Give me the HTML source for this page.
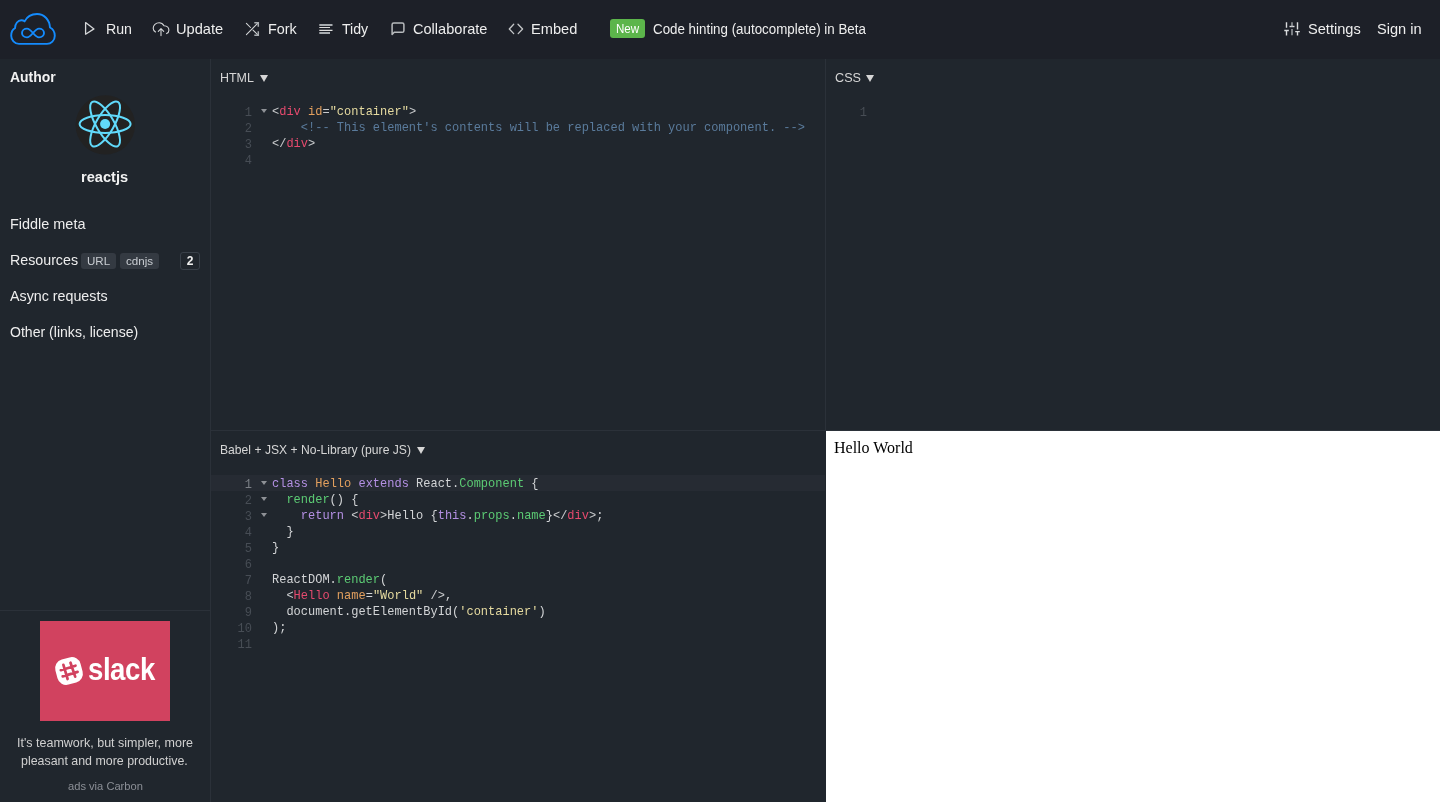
<!DOCTYPE html>
<html>
<head>
<meta charset="utf-8">
<style>
*{margin:0;padding:0;box-sizing:border-box}
html,body{width:1440px;height:802px;overflow:hidden;background:#20262d;font-family:"Liberation Sans",sans-serif}
#root{position:absolute;left:0;top:0;width:1440px;height:802px;background:#20262d;will-change:transform;overflow:hidden}
.abs{position:absolute}
.tx{position:absolute;line-height:20px;white-space:pre;transform-origin:0 0}
.code{position:absolute;font-family:"Liberation Mono",monospace;font-size:13px;line-height:16px;white-space:pre;color:#d2d4d6;transform:scaleX(0.923077);transform-origin:0 0}
.gut{position:absolute;font-family:"Liberation Mono",monospace;font-size:12px;line-height:16px;white-space:pre;color:#474d55;text-align:right;width:40px}
.fold{position:absolute;width:0;height:0;border-left:3px solid transparent;border-right:3px solid transparent;border-top:4px solid #8e9196}
.tri{position:absolute;width:0;height:0;border-left:4px solid transparent;border-right:4px solid transparent;border-top:7px solid #d6d6d6}
.t{color:#e54a6e}.at{color:#e3a05e}.s{color:#e6dba0}.c{color:#5a7b9c}.k{color:#b490e4}.d{color:#e3a05e}.p{color:#5ccb74}.b{color:#c9cbcd}
</style>
</head>
<body>
<div id="root">
<!-- header -->
<div class="abs" style="left:0;top:0;width:1440px;height:59px;background:#1d2028"></div>

<svg class="abs" style="left:0;top:0" width="1440" height="59" viewBox="0 0 1440 59">
  <g fill="none" stroke="#148bfd" stroke-width="1.9" stroke-linejoin="round" stroke-linecap="round">
    <path d="M19 43.9 C14.5 43.9 11.2 40 11.2 35.8 C11.2 32 13 29.3 15 28.2 C15 23.5 18 20.3 21.3 20.3 C22.5 20.3 23.8 20.7 24.6 21.4 C26.8 17 31.5 14 37 14 C44 14 49.5 19.5 50 27.5 C53 29 54.8 32 54.8 35.8 C54.8 40.5 51 43.9 47 43.9 Z"/>
    <path d="M33 33 C30.5 30 29.3 28.6 27 28.6 C24.2 28.6 22 30.5 22 33 C22 35.5 24.2 37.4 27 37.4 C29.3 37.4 30.5 36 33 33 C35.5 30 36.7 28.6 39 28.6 C41.8 28.6 44 30.5 44 33 C44 35.5 41.8 37.4 39 37.4 C36.7 37.4 35.5 36 33 33 Z"/>
  </g>
  <g fill="none" stroke="#d4d6d8" stroke-width="1.3" stroke-linejoin="round" stroke-linecap="round">
    <path d="M85.6 22.6 L94 28.9 L85.6 34.2 Z"/>
    <path d="M155.5 32 C154 31 153.2 29.8 153.2 28.3 C153.2 25.3 155.8 22.8 159.2 22.8 C161.2 22.8 162.8 23.8 164 25.8 C166.8 26 168.9 27.8 168.9 30.2 C168.9 31.7 168 32.9 166.6 33.6" stroke-width="1.1"/>
    <path d="M161 35.6 V29.2 M158.3 31.4 L161 28.7 L163.7 31.4" stroke-width="1.1"/>
    <path d="M246.4 23.4 L250.5 27.5 M253 30.1 L257.6 34.6 M246.4 34.6 L257.6 23.4" stroke-width="1.05"/>
    <path d="M254.3 22.8 H258.3 V26.8 M258.3 31.2 V35.3 H254.3" stroke="#a9adb1" stroke-width="1.5" stroke-linecap="butt" stroke-linejoin="miter"/>
    <path d="M394.2 32.3 H402.3 Q403.9 32.3 403.9 30.7 V24.5 Q403.9 22.9 402.3 22.9 H393.7 Q392.1 22.9 392.1 24.5 V34.5 Z" stroke="#b7babd" stroke-width="1.5"/>
    <path d="M513.7 24.3 L509.3 29 L513.7 33.6 M518 24.3 L522.6 29 L518.2 33.6" stroke="#c4c6c8" stroke-width="1.3"/>
  </g>
  <g stroke-linecap="butt" fill="none">
    <path d="M319.3 25 H332.5 M319.3 33 H330" stroke="#a7abaf" stroke-width="1.8"/>
    <path d="M319.3 27.5 H330 M319.3 30.4 H332.5" stroke="#dcdcdc" stroke-width="1.2"/>
  </g>
  <g fill="none" stroke="#dadcde" stroke-width="1.4" stroke-linecap="butt">
    <path d="M1286.5 22.2 V27.8 M1284.3 30.5 H1288.8 M1286.5 30.5 V35.5"/>
    <path d="M1289.5 26.5 H1294.5"/>
    <path d="M1292 22.2 V26.5 M1292 29 V35.3" stroke="#a3a7ab"/>
    <path d="M1297.5 22.2 V29.4 M1295.2 31.6 H1299.8 M1297.5 31.6 V35.5"/>
  </g>
</svg>
<div class="abs" style="left:610px;top:19px;width:35px;height:19px;background:#5cb54b;border-radius:3px"></div>

<!-- borders -->
<div class="abs" style="left:210px;top:59px;width:1px;height:743px;background:#2b3139"></div>
<div class="abs" style="left:825px;top:59px;width:1px;height:372px;background:#2b3139"></div>
<div class="abs" style="left:211px;top:430px;width:1229px;height:1px;background:#2b3139"></div>
<div class="abs" style="left:0;top:610px;width:210px;height:1px;background:#2b3139"></div>

<!-- react logo -->
<svg class="abs" style="left:0;top:59px" width="210" height="120" viewBox="0 59 210 120">
  <circle cx="105.3" cy="124.9" r="29.7" fill="#222222"/>
  <g fill="none" stroke="#61dafb" stroke-width="2">
    <ellipse cx="105.1" cy="124" rx="25.5" ry="8.9"/>
    <ellipse cx="105.1" cy="124" rx="25.5" ry="8.9" transform="rotate(60 105.1 124)"/>
    <ellipse cx="105.1" cy="124" rx="25.5" ry="8.9" transform="rotate(120 105.1 124)"/>
  </g>
  <circle cx="105.1" cy="124" r="5" fill="#61dafb"/>
</svg>

<!-- badges -->
<div class="abs" style="left:81px;top:253px;width:35px;height:16px;background:#343a42;border-radius:3px"></div>
<div class="abs" style="left:120px;top:253px;width:39px;height:16px;background:#343a42;border-radius:3px"></div>
<div class="abs" style="left:180px;top:252px;width:20px;height:18px;border:1px solid #394049;border-radius:3px;color:#f0f0f0;font-size:12px;font-weight:bold;line-height:16px;text-align:center">2</div>

<!-- slack ad -->
<div class="abs" style="left:40px;top:621px;width:130px;height:100px;background:#d1425f"></div>
<svg class="abs" style="left:40px;top:621px" width="130" height="100" viewBox="40 621 130 100">
  <rect x="56" y="658" width="26" height="26" rx="9" transform="rotate(-15 69 671)" fill="#ffffff"/>
  <g stroke="#d1425f" stroke-width="2.7" stroke-linecap="round">
    <path d="M63.4 664.8 L67.6 679 M70.5 662.7 L75.2 676.6 M60.8 670.2 L75.5 665.7 M62.7 676.4 L77.6 671.9"/>
  </g>
</svg>
<div class="tx" id="t_slack" style="left:88px;top:660px;font-size:31px;font-weight:bold;color:#ffffff;transform:scaleX(0.89);letter-spacing:-0.5px">slack</div>

<!-- HTML panel -->
<div class="tri" style="left:260px;top:75px"></div>
<div class="gut" style="left:212px;top:105px">1
2
3
4</div>
<div class="fold" style="left:261px;top:109px"></div>
<div class="code" style="left:272px;top:104px"><span class="b">&lt;</span><span class="t">div</span> <span class="at">id</span><span class="b">=</span><span class="s">"container"</span><span class="b">&gt;</span>
    <span class="c">&lt;!-- This element's contents will be replaced with your component. --&gt;</span>
<span class="b">&lt;/</span><span class="t">div</span><span class="b">&gt;</span>
</div>

<!-- CSS panel -->
<div class="tri" style="left:866px;top:75px"></div>
<div class="gut" style="left:827px;top:105px">1</div>

<!-- JS panel -->
<div class="tri" style="left:417px;top:447px"></div>
<div class="abs" style="left:211px;top:475px;width:614px;height:16px;background:#262b33"></div>
<div class="gut" style="left:212px;top:477px"><span style="color:#7c8087">1</span>
2
3
4
5
6
7
8
9
10
11</div>
<div class="fold" style="left:261px;top:481px"></div>
<div class="fold" style="left:261px;top:497px"></div>
<div class="fold" style="left:261px;top:513px"></div>
<div class="code" style="left:272px;top:476px"><span class="k">class</span> <span class="d">Hello</span> <span class="k">extends</span> React.<span class="p">Component</span> {
  <span class="p">render</span>() {
    <span class="k">return</span> <span class="b">&lt;</span><span class="t">div</span><span class="b">&gt;</span>Hello {<span class="k">this</span>.<span class="p">props</span>.<span class="p">name</span>}<span class="b">&lt;/</span><span class="t">div</span><span class="b">&gt;</span>;
  }
}

ReactDOM.<span class="p">render</span>(
  <span class="b">&lt;</span><span class="t">Hello</span> <span class="at">name</span>=<span class="s">"World"</span> <span class="b">/&gt;</span>,
  document.getElementById(<span class="s">'container'</span>)
);
</div>

<!-- output -->
<div class="abs" style="left:826px;top:431px;width:614px;height:371px;background:#ffffff"></div>
<div class="abs" style="left:834px;top:439px;font-family:'Liberation Serif',serif;font-size:16px;line-height:18px;color:#000;white-space:pre">Hello World</div>

<!-- texts -->
<div class="tx" id="t_run" style="left:105.76px;top:19px;font-size:15px;color:#eeeeee;transform:scaleX(0.9442)">Run</div>
<div class="tx" id="t_update" style="left:176.03px;top:19px;font-size:15px;color:#eeeeee;transform:scaleX(0.9745)">Update</div>
<div class="tx" id="t_fork" style="left:267.94px;top:19px;font-size:15px;color:#eeeeee;transform:scaleX(0.9586)">Fork</div>
<div class="tx" id="t_tidy" style="left:341.9px;top:19px;font-size:15px;color:#eeeeee;transform:scaleX(0.9429)">Tidy</div>
<div class="tx" id="t_collab" style="left:413.13px;top:19px;font-size:15px;color:#eeeeee;transform:scaleX(0.9707)">Collaborate</div>
<div class="tx" id="t_embed" style="left:531.43px;top:19px;font-size:15px;color:#eeeeee;transform:scaleX(0.9739)">Embed</div>
<div class="tx" id="t_settings" style="left:1307.73px;top:19px;font-size:15px;color:#eeeeee;transform:scaleX(0.9736)">Settings</div>
<div class="tx" id="t_signin" style="left:1376.73px;top:19px;font-size:15px;color:#eeeeee;transform:scaleX(0.9727)">Sign in</div>
<div class="tx" id="t_hint" style="left:653.25px;top:19px;font-size:14px;color:#eeeeee;transform:scaleX(0.9532)">Code hinting (autocomplete) in Beta</div>
<div class="tx" id="t_new" style="left:615.73px;top:19px;font-size:12px;color:#ffffff;transform:scaleX(0.9652)">New</div>
<div class="tx" id="t_author" style="left:10.0px;top:67px;font-size:15px;font-weight:bold;color:#f2f2f2;transform:scaleX(0.9306)">Author</div>
<div class="tx" id="t_reactjs" style="left:81.23px;top:167px;font-size:15px;font-weight:bold;color:#f2f2f2;transform:scaleX(0.9745)">reactjs</div>
<div class="tx" id="t_fiddle" style="left:9.54px;top:214px;font-size:15px;color:#eeeeee;transform:scaleX(0.9623)">Fiddle meta</div>
<div class="tx" id="t_resources" style="left:9.55px;top:250px;font-size:15px;color:#eeeeee;transform:scaleX(0.9486)">Resources</div>
<div class="tx" id="t_async" style="left:9.6px;top:286px;font-size:15px;color:#eeeeee;transform:scaleX(0.951)">Async requests</div>
<div class="tx" id="t_other" style="left:9.56px;top:322px;font-size:15px;color:#eeeeee;transform:scaleX(0.9378)">Other (links, license)</div>
<div class="tx" id="t_url" style="left:87.2px;top:251px;font-size:11px;color:#c9cdd2;transform:scaleX(1.05)">URL</div>
<div class="tx" id="t_cdnjs" style="left:125.5px;top:251px;font-size:11px;color:#c9cdd2;transform:scaleX(1.055)">cdnjs</div>
<div class="tx" id="t_ad1" style="left:16.64px;top:733px;font-size:13px;color:#d0d0d0;transform:scaleX(0.9615)">It's teamwork, but simpler, more</div>
<div class="tx" id="t_ad2" style="left:21.45px;top:751px;font-size:13px;color:#d0d0d0;transform:scaleX(0.9538)">pleasant and more productive.</div>
<div class="tx" id="t_carbon" style="left:67.9px;top:776px;font-size:11px;color:#8b8f96;transform:scaleX(1.0123)">ads via Carbon</div>
<div class="tx" id="t_html" style="left:219.74px;top:68px;font-size:13px;color:#d6d6d6;transform:scaleX(0.9588)">HTML</div>
<div class="tx" id="t_css" style="left:834.73px;top:68px;font-size:13px;color:#d6d6d6;transform:scaleX(0.972)">CSS</div>
<div class="tx" id="t_babel" style="left:219.97px;top:440px;font-size:13px;color:#d6d6d6;transform:scaleX(0.934)">Babel + JSX + No-Library (pure JS)</div>
</div>
</body>
</html>
